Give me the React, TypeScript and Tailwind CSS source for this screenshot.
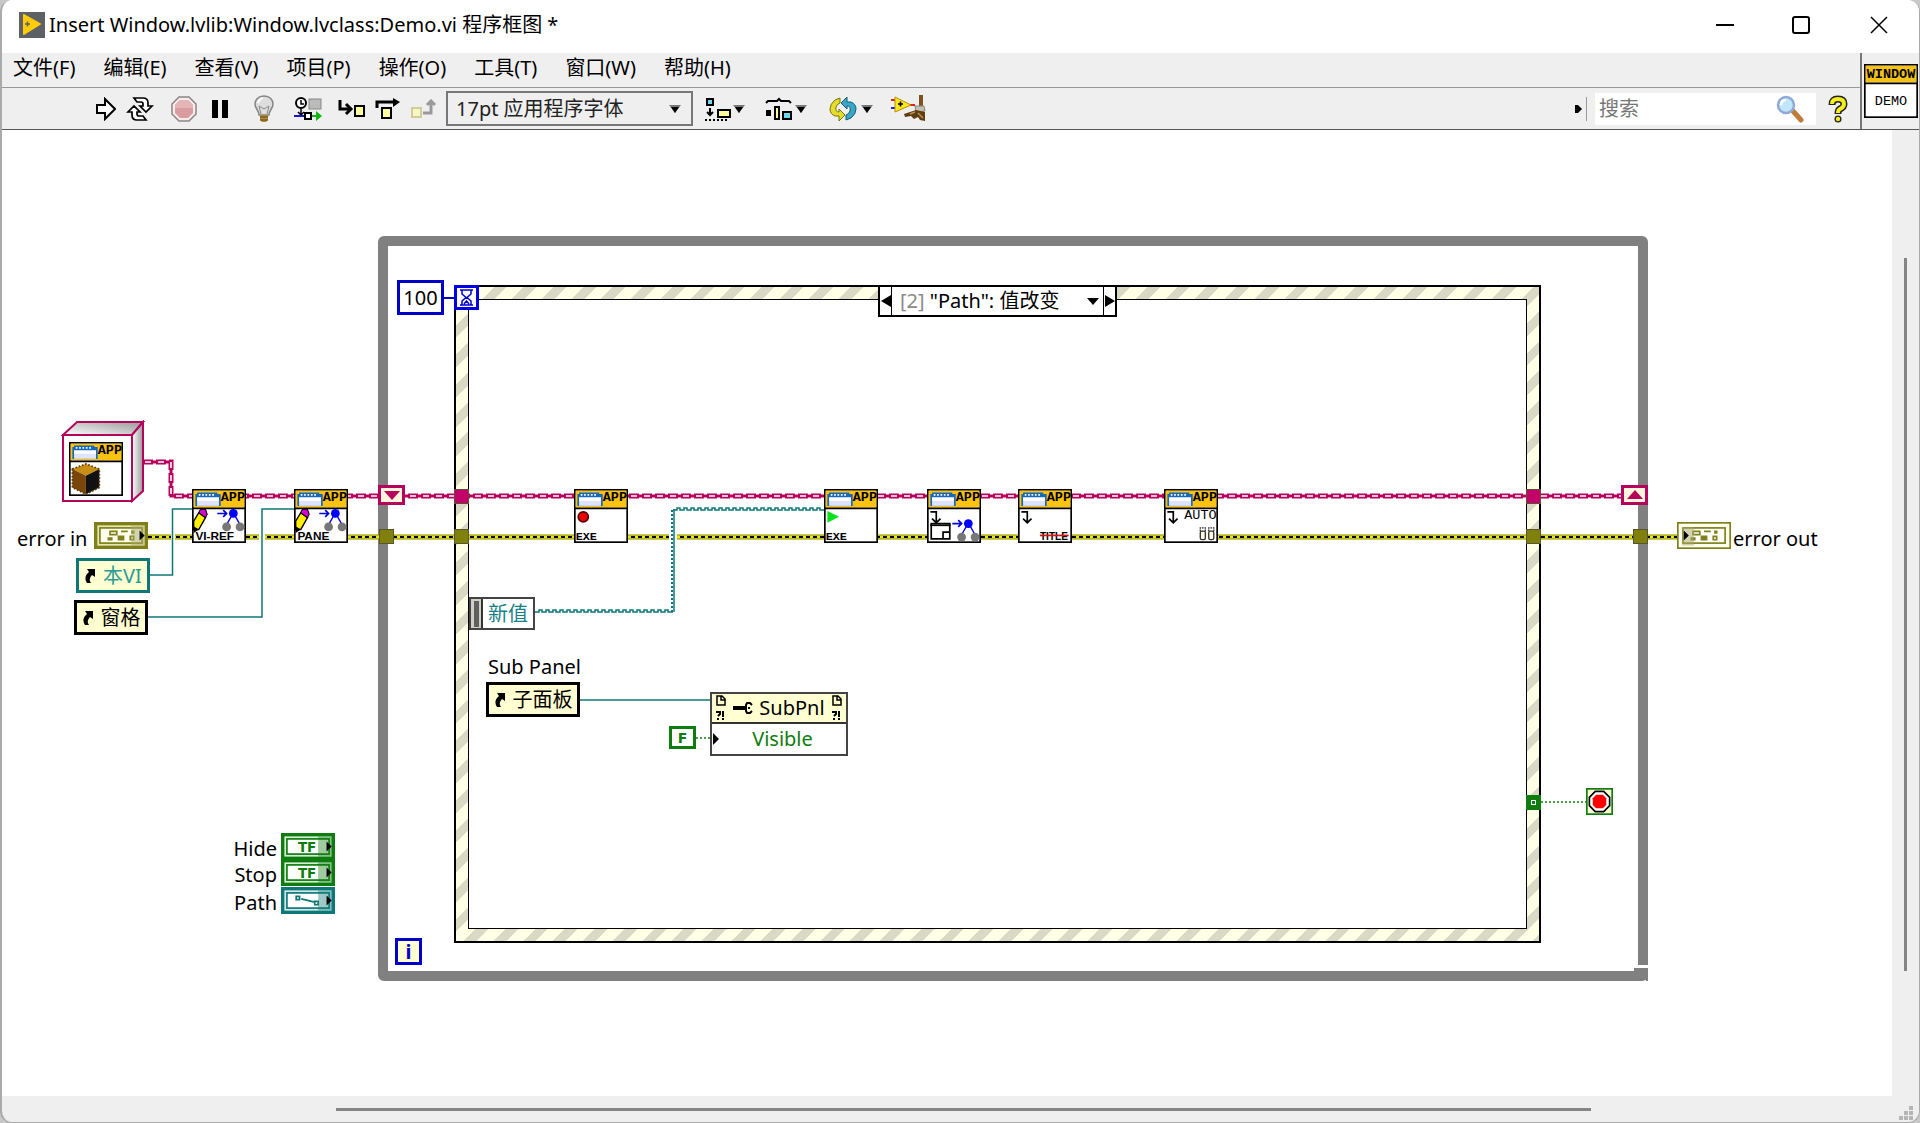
import type { ReactNode } from "react"

const menus = ["文件(F)", "编辑(E)", "查看(V)", "项目(P)", "操作(O)", "工具(T)", "窗口(W)", "帮助(H)"]

const mono = "Liberation Mono, monospace"
const sans = "Liberation Sans, sans-serif"

// square wave used for path-type wires
function wave(x1: number, x2: number, y: number) {
  let d = `M${x1} ${y}`
  for (let x = x1; x + 7 <= x2; x += 7) d += "h4v-2h3v2"
  return `${d}H${x2}`
}

/* ---------- toolbar icons ---------- */

function ToolButton({ label, className, children }: { label: string; className: string; children: ReactNode }) {
  return (
    <button aria-label={label} className={`flex h-8 shrink-0 items-center justify-center ${className}`}>
      {children}
    </button>
  )
}

function DropArrow() {
  return (
    <svg width="12" height="8" viewBox="0 0 12 8">
      <path d="M0 0h12L6 8z" fill="#777" />
      <path d="M2 2h8L6 8z" fill="#000" />
    </svg>
  )
}

function LogoIcon() {
  return (
    <svg width="26" height="26" viewBox="0 0 26 26">
      <rect width="26" height="26" fill="#5d6065" />
      <path d="M4 3q0-1 1-1l16 9q2 1 0 2L5 23q-1 0-1-1z" fill="#ffcc0a" />
      <path d="M6 12h5M8.500 9.500v5" stroke="#5d6065" strokeWidth="1.500" />
    </svg>
  )
}

function RunIcon() {
  return (
    <svg width="20" height="24" viewBox="0 0 20 24">
      <path d="M1 8h8V2l10 10L9 22v-6H1z" fill="#fff" stroke="#000" strokeWidth="2" />
    </svg>
  )
}

function RunLoopIcon() {
  return (
    <svg width="28" height="26" viewBox="0 0 28 26" fill="#fff" stroke="#000" strokeWidth="1.700">
      <path d="M8 2h9q5 0 5 5v3h4l-6 6-6-6h3V8q0-2-2-2h-4z" />
      <path d="M20 24h-9q-5 0-5-5v-3H2l6-6 6 6h-3v2q0 2 2 2h4z" />
    </svg>
  )
}

function AbortIcon() {
  return (
    <svg width="26" height="26" viewBox="0 0 26 26">
      <path d="M8 1h10l7 7v10l-7 7H8l-7-7V8z" fill="#f6eaea" stroke="#8d8585" strokeWidth="1.5" />
      <path d="M9 4h8l5 5v8l-5 5H9l-5-5V9z" fill="#d99ca0" />
      <path d="M9 4h8l5 5v3H4V9z" fill="#e4b4b6" />
    </svg>
  )
}

function PauseIcon() {
  return (
    <svg width="16" height="18" viewBox="0 0 16 18">
      <path d="M0 0h6v18H0zM10 0h6v18h-6z" fill="#000" />
    </svg>
  )
}

function BulbIcon() {
  return (
    <svg width="22" height="28" viewBox="0 0 22 28">
      <path
        d="M11 1c6 0 9 4 9 8 0 5-4 6-4 11H6c0-5-4-6-4-11 0-4 3-8 9-8z"
        fill="#dedede"
        stroke="#858585"
        strokeWidth="1.5"
      />
      <path d="M5 8q1-4 5-5" fill="none" stroke="#fff" strokeWidth="2" />
      <path d="M8 19l-2-8 5 3 5-3-2 8" fill="none" stroke="#8a8a8a" />
      <path d="M7 20h8v5l-2 2H9l-2-2z" fill="#b28b3c" />
      <path d="M7 22h8M7 25h8" stroke="#5e4415" />
    </svg>
  )
}

function RetainIcon() {
  return (
    <svg width="28" height="26" viewBox="0 0 28 26">
      <circle cx="7" cy="7" r="5" fill="#fff" stroke="#000" strokeWidth="2" />
      <path d="M7 4v4h3M7 12v7M4 16l3 3 3-3" fill="none" stroke="#000" strokeWidth="1.5" />
      <rect x="15" y="3" width="12" height="10" fill="#bbb" stroke="#888" />
      <path d="M0 20h12" stroke="#1414c8" strokeWidth="2" />
      <rect x="11" y="17" width="6" height="6" fill="#fff" stroke="#000" strokeWidth="2" />
      <path d="M18 19h4v-4l6 5-6 5v-4h-4z" fill="#12b512" />
    </svg>
  )
}

function StepIntoIcon() {
  return (
    <svg width="28" height="20" viewBox="0 0 28 20">
      <path d="M2 1v9h9M8 5l5 5-5 5" fill="none" stroke="#000" strokeWidth="3" />
      <rect x="17" y="7" width="9" height="10" fill="#ffff9e" stroke="#000" strokeWidth="2" />
    </svg>
  )
}

function StepOverIcon() {
  return (
    <svg width="26" height="22" viewBox="0 0 26 22">
      <path d="M2 10V4h18" fill="none" stroke="#000" strokeWidth="3" />
      <path d="M18 0l7 4-7 5z" fill="#000" />
      <rect x="7" y="10" width="9" height="10" fill="#ffff9e" stroke="#000" strokeWidth="2" />
    </svg>
  )
}

function StepOutIcon() {
  return (
    <svg width="26" height="20" viewBox="0 0 26 20">
      <rect x="1" y="9" width="9" height="9" fill="#f8f6c2" stroke="#cfcd98" strokeWidth="2" />
      <path d="M12 14h8V4M16 6l4-4 4 4" fill="none" stroke="#999" strokeWidth="3" />
    </svg>
  )
}

function AlignIcon() {
  return (
    <svg width="26" height="24" viewBox="0 0 26 24">
      <rect x="2" y="2" width="6" height="6" fill="#6fd7ee" stroke="#000" strokeWidth="2" />
      <path d="M5 11v7M2 15l3 3 3-3" fill="none" stroke="#000" strokeWidth="2" />
      <rect x="13" y="13" width="12" height="7" fill="#ffff9e" stroke="#000" strokeWidth="2" />
      <path d="M0 23h22" stroke="#000" strokeDasharray="2 2" strokeWidth="2" />
    </svg>
  )
}

function DistributeIcon() {
  return (
    <svg width="28" height="24" viewBox="0 0 28 24">
      <path d="M1 6l2-2h9l2-2 2 2h8l2 2" fill="none" stroke="#000" strokeWidth="2" />
      <rect x="1" y="13" width="5" height="6" fill="#000" />
      <rect x="10" y="10" width="4" height="12" fill="#ffff9e" stroke="#000" strokeWidth="2" />
      <rect x="18" y="15" width="8" height="7" fill="#6fd7ee" stroke="#000" strokeWidth="2" />
    </svg>
  )
}

function ReorderIcon() {
  return (
    <svg width="28" height="26" viewBox="0 0 28 26">
      <path
        d="M11 2L6 4Q1 8 1 13t5 7h4v5l6-6-6-6v3q-4 0-3-5 1-3 4-4z"
        fill="#e4de28"
        stroke="#77730c"
      />
      <path
        d="M17 24l5-2q5-4 5-9t-5-7h-4V1l-6 6 6 6v-3q4 0 3 5-1 3-4 4z"
        fill="#3ba7c6"
        stroke="#125c76"
      />
    </svg>
  )
}

function CleanupIcon() {
  return (
    <svg width="36" height="28" viewBox="0 0 36 28">
      <path d="M0 5h4M18 10h6" stroke="#d22" strokeWidth="2" />
      <path d="M0 13h4" stroke="#22d" strokeWidth="2" />
      <path d="M4 2l16 8L4 17z" fill="#ffe81a" stroke="#b98f00" />
      <path d="M7 9h5M9.500 6.500v5" stroke="#000" strokeWidth="1.5" />
      <path d="M28 0h4v12h-4z" fill="#7a5320" />
      <path d="M24 11h9l1 5-9 1z" fill="#c4c0b0" stroke="#8a8676" />
      <path d="M13 19l12-4 9 2v9l-5-1-2-3-4 2-3-3-6 1z" fill="#5d3e10" />
      <path d="M19 19l5-2M27 18l5 5" stroke="#c0904a" strokeWidth="1.5" />
    </svg>
  )
}

function MagnifierIcon() {
  return (
    <svg width="28" height="28" viewBox="0 0 28 28">
      <path d="M17 16l8 9" stroke="#c07a3c" strokeWidth="5" strokeLinecap="round" />
      <circle cx="10" cy="10" r="8" fill="#bfe6fb" stroke="#8fa9d6" strokeWidth="2.5" />
      <path d="M5 10q0-5 5-5" fill="none" stroke="#fff" strokeWidth="2.5" />
    </svg>
  )
}

function HelpIcon() {
  return (
    <svg width="20" height="28" viewBox="0 0 20 28">
      <path d="M4 10q0-6 6-6t6 5q0 3-4 5-2 1-2 5" fill="none" stroke="#222" strokeWidth="7" />
      <circle cx="10" cy="24" r="3.5" fill="#222" />
      <path d="M4 9q0-5 6-5t6 5q0 3-4 5-2 1-2 4" fill="none" stroke="#f5ee1c" strokeWidth="4" />
      <circle cx="10" cy="24" r="2.2" fill="#f5ee1c" />
    </svg>
  )
}

/* ---------- diagram glyphs ---------- */

function SubVi({ className, children }: { className: string; children: ReactNode }) {
  return (
    <svg viewBox="0 0 32 32" className={`absolute size-[54px] ${className}`}>
      <rect x="0.5" y="0.5" width="31" height="31" fill="#fff" stroke="#000" />
      <rect x="1" y="1" width="30" height="10" fill="#ffc20e" />
      <path d="M0 11.5h32" stroke="#000" />
      <path d="M2 3h1V2h12v1h2v7H2z" fill="#1668b8" />
      <path d="M3 5h13v5H3z" fill="#dfe3ff" />
      <path d="M3 5h13v2H3z" fill="#fff" />
      <path d="M4 3.5h10" stroke="#fff" strokeDasharray="1 1" />
      <text x="17" y="7" fontFamily={mono} fontSize="8" fontWeight="700">
        APP
      </text>
      {children}
    </svg>
  )
}

function RefGlyph({ y = 0 }: { y?: number }) {
  return (
    <g transform={`translate(0 ${y})`}>
      <path d="M15 14.5h5M18.500 12.500l2 2-2 2" fill="none" stroke="#0000e0" />
      <path d="M24 15l-4 7M25 15l4 7" stroke="#0000e0" strokeWidth="0.8" />
      <circle cx="24.500" cy="14.500" r="2.600" fill="#0000ff" />
      <circle cx="20.500" cy="22.500" r="2.600" fill="#777" />
      <circle cx="28.500" cy="22.500" r="2.600" fill="#777" />
    </g>
  )
}

function PencilGlyph() {
  return (
    <g>
      <path d="M4 14l4 3-4 7H1v-5z" fill="#ffee00" stroke="#000" strokeWidth="0.8" />
      <path d="M5 12h3l1 3-1 2-4-3z" fill="#d400d4" stroke="#000" strokeWidth="0.6" />
      <path d="M1 22v4l3-2z" fill="#000" />
    </g>
  )
}

function DownArrowGlyph() {
  return <path d="M2 13.500h3.500v6M3 17.500l2.500 2.500 2.500-2.500" fill="none" stroke="#000" />
}

function RefConstant({ className, children }: { className: string; children: ReactNode }) {
  return (
    <div className={`absolute flex h-[35px] items-center justify-center gap-2 border-3 bg-[#ffffd2] ${className}`}>
      <svg width="11" height="16" viewBox="0 0 11 16">
        <path d="M3 1h8v8L8 7q-4 4-1 8H3q-4-6 2-11z" fill="#000" />
      </svg>
      <span>{children}</span>
    </div>
  )
}

function BoolTerminal({ className }: { className: string }) {
  return (
    <svg viewBox="0 0 32 16" className={`absolute h-[27px] w-[54px] ${className}`}>
      <rect width="32" height="16" fill="#0e7c0e" />
      <rect x="2" y="2" width="28" height="12" fill="#d5ecd5" />
      <rect x="3.500" y="3.500" width="25" height="9" fill="#fff" stroke="#0e7c0e" />
      <text x="10" y="11" fontFamily="DejaVu Sans, sans-serif" fontSize="8" fontWeight="700" fill="#0e7c0e">
        TF
      </text>
      <rect x="22" y="2" width="9" height="12" fill="#0e7c0e" opacity="0.4" />
      <path d="M27 5v6l3-3z" fill="#000" />
    </svg>
  )
}

function PathTerminal({ className }: { className: string }) {
  return (
    <svg viewBox="0 0 32 16" className={`absolute h-[27px] w-[54px] ${className}`}>
      <rect width="32" height="16" fill="#0e7878" />
      <rect x="2" y="2" width="28" height="12" fill="#d2eaea" />
      <rect x="3.500" y="3.500" width="25" height="9" fill="#fff" stroke="#0e7878" />
      <path d="M9 5.500h2v2H9zM20 8.500h2v2h-2zM12 7l8 2" fill="none" stroke="#0e7878" />
      <rect x="22" y="2" width="9" height="12" fill="#0e7878" opacity="0.4" />
      <path d="M27 5v6l3-3z" fill="#000" />
    </svg>
  )
}

function ClusterGlyph() {
  return (
    <g fill="#80801a">
      <path d="M9 5h5v3H9zM10 6v1h3V6z" fillRule="evenodd" />
      <path d="M16 5h4v1h-4zM22 5h2v2h-2zM8 9h3v2H8zM14 8h4v3h-4zM21 8h3v3h-3zM22 9v1h1V9z" fillRule="evenodd" />
    </g>
  )
}

function ErrorIn({ className }: { className: string }) {
  return (
    <svg viewBox="0 0 32 16" className={`absolute h-[27px] w-[54px] ${className}`}>
      <rect width="32" height="16" fill="#80801a" />
      <rect x="2" y="2" width="28" height="12" fill="#e8e8b4" />
      <rect x="3.500" y="3.500" width="25" height="9" fill="#fffff0" stroke="#80801a" />
      <ClusterGlyph />
      <rect x="22" y="2" width="8" height="12" fill="#a8a868" opacity="0.5" />
      <path d="M27 5v6l3-3z" fill="#000" />
    </svg>
  )
}

function ErrorOut({ className }: { className: string }) {
  return (
    <svg viewBox="0 0 32 16" className={`absolute h-[27px] w-[54px] ${className}`}>
      <rect x="0.500" y="0.500" width="31" height="15" fill="#fffff0" stroke="#80801a" />
      <rect x="3.500" y="3.500" width="25" height="9" fill="#fff" stroke="#80801a" />
      <ClusterGlyph />
      <rect x="3" y="3" width="7" height="11" fill="#a8a868" opacity="0.5" />
      <path d="M4 5v6l3-3z" fill="#000" />
    </svg>
  )
}

function ShiftRegister({ className, d }: { className: string; d: string }) {
  return (
    <div
      className={`absolute flex h-5 w-[27px] items-center justify-center border-3 border-[#b5045c] bg-[#fff4dc] ${className}`}
    >
      <svg width="18" height="10" viewBox="0 0 18 10">
        <path d={d} fill="#b5045c" />
      </svg>
    </div>
  )
}

function Tunnel({ className }: { className: string }) {
  return <div className={`absolute size-[15px] border border-[#555530] ${className}`} />
}

function PropertyFlags() {
  return (
    <svg width="10" height="26" viewBox="0 0 10 26">
      <path d="M1 1h5l3 3v6H1z M5 1v4h4" fill="none" stroke="#000" strokeWidth="1.5" />
      <path d="M0 17h4v2l-2 2M2 23v2M7 16v6M7 23v2" fill="none" stroke="#000" strokeWidth="2" />
    </svg>
  )
}

function Wires() {
  const classWire = "M141 332H169V366H1620"
  const errorWire = "M146 407H1676"
  return (
    <svg width="1890" height="966" className="absolute left-0 top-0" fill="none">
      <path d={classWire} stroke="#b5045c" strokeWidth="5" strokeDasharray="10 3" />
      <path d={classWire} stroke="#b5045c" strokeWidth="3" />
      <path d={classWire} stroke="#fff" strokeWidth="1.600" strokeDasharray="6 7" strokeDashoffset="-2" />

      <path d={errorWire} stroke="#8c8c00" strokeWidth="5" />
      <path d={errorWire} stroke="#eaea00" strokeWidth="3" />
      <path d={errorWire} stroke="#000" strokeWidth="2" strokeDasharray="4 3" />

      {/* gaps where reference wires jump over the error wire */}
      <path d="M171 402v10" stroke="#fff" strokeWidth="4" />
      <path d="M260 402v10" stroke="#fff" strokeWidth="6" />
      <path d="M671 402v10" stroke="#fff" strokeWidth="8" />
      <g stroke="#0e7878" strokeWidth="1.500">
        <path d="M147 445H170.500V379H190" />
        <path d="M146 487H260V379H293" />
        <path d="M578 570H708" />
        <path d={wave(533, 671, 482)} />
        <path d={wave(671, 822, 380)} />
        <path d="M672 482V379" />
        <path d="M670 482V379" strokeDasharray="2 2" strokeWidth="2" />
      </g>
      <path d="M442 168h12" stroke="#0000c8" strokeWidth="2" />
      <path d="M694 608h14M1539 672h45" stroke="#0e7c0e" strokeWidth="1.500" strokeDasharray="2 2" />
    </svg>
  )
}

function Diagram() {
  return (
    <main className="relative min-h-[880px] flex-1 overflow-hidden bg-white">
      {/* while loop */}
      <div className="absolute left-[376px] top-[106px] h-[745px] w-[1270px] rounded-md border-10 border-[#808080]" />
      <svg width="16" height="18" className="absolute left-[1632px] top-[834px]">
        <path d="M0 1h16v3H0z" fill="#fff" />
        <path d="M0 4h14v13h-2v-1H7v1H0V6z" fill="#808080" />
      </svg>

      {/* event structure */}
      <div className="absolute left-[452px] top-[155px] h-[658px] w-[1087px] border-2 border-black bg-[repeating-linear-gradient(135deg,#ffffe6_0px,#ffffe6_6px,#d9d9c6_6px,#d9d9c6_15px,#ffffe6_15px,#ffffe6_21px)] p-3">
        <div className="h-full border border-black bg-white" />
      </div>

      <Wires />

      <div className="absolute left-[876px] top-[155px] flex h-8 w-[239px] border-2 border-black bg-white">
        <button aria-label="Previous case" className="flex w-3 items-center justify-center border-r border-black">
          <svg width="10" height="12" viewBox="0 0 10 12">
            <path d="M10 0v12L0 6z" />
          </svg>
        </button>
        <button className="flex flex-1 items-center justify-between pl-2 pr-1">
          <span className="whitespace-pre">
            <span className="text-[#8a8a8a]">[2]</span> "Path": 值改变
          </span>
          <svg width="12" height="7" viewBox="0 0 12 7">
            <path d="M0 0h12L6 7z" />
          </svg>
        </button>
        <button aria-label="Next case" className="flex w-3 items-center justify-center border-l border-black">
          <svg width="10" height="12" viewBox="0 0 10 12">
            <path d="M0 0v12l10-6z" />
          </svg>
        </button>
      </div>

      <div className="absolute left-[395px] top-[150px] flex h-[35px] w-[47px] items-center justify-center border-3 border-[#0000c8] bg-white">
        100
      </div>
      <div className="absolute left-[452px] top-[155px] flex size-[25px] items-center justify-center border-3 border-[#0000e0] bg-white">
        <svg width="15" height="17" viewBox="0 0 15 17" fill="none" stroke="#0000c8" strokeWidth="1.500">
          <path d="M1 1h13M1 16h13M3 1v4l4 3.500L3 12v4M12 1v4L8 8.500l4 3.500v4M5 15l2.500-3 2.500 3" />
        </svg>
      </div>
      <div className="absolute left-[393px] top-[808px] flex size-[27px] items-center justify-center border-3 border-[#0000c8] bg-[#ffffd2] font-bold text-[#0000c8]">
        i
      </div>

      <ShiftRegister className="left-[376px] top-[355px]" d="M1 1h16L9 10z" />
      <ShiftRegister className="left-[1619px] top-[355px]" d="M1 9h16L9 0z" />
      <Tunnel className="left-[452px] top-[359px] bg-[#c4006a]" />
      <Tunnel className="left-[1524px] top-[359px] bg-[#c4006a]" />
      <Tunnel className="left-[377px] top-[399px] bg-[#80800a]" />
      <Tunnel className="left-[452px] top-[399px] bg-[#80800a]" />
      <Tunnel className="left-[1524px] top-[399px] bg-[#80800a]" />
      <Tunnel className="left-[1631px] top-[399px] bg-[#80800a]" />
      <div className="absolute left-[1524px] top-[665px] flex size-[15px] items-center justify-center bg-[#0e7c0e]">
        <div className="size-[5px] border border-white" />
      </div>

      {/* class constant */}
      <svg width="84" height="84" className="absolute left-[59px] top-[290px]">
        <defs>
          <linearGradient id="cubeTop" x1="0" x2="1" y1="1" y2="0">
            <stop offset="0" stopColor="#fff" />
            <stop offset="1" stopColor="#999" />
          </linearGradient>
          <linearGradient id="cubeSide" x1="0" x2="1">
            <stop offset="0" stopColor="#fff" />
            <stop offset="1" stopColor="#999" />
          </linearGradient>
        </defs>
        <g stroke="#b5045c" strokeWidth="2">
          <path d="M2 15L16 2h66L71 15z" fill="url(#cubeTop)" />
          <path d="M71 15L82 2v69L71 81z" fill="url(#cubeSide)" />
          <path d="M2 15h69v66H2z" fill="#fff" />
        </g>
      </svg>
      <SubVi className="left-[67px] top-[312px]">
        <path d="M2 16l8-3 8 3-8 4z" fill="#c98e14" />
        <path d="M2 16l8 4v11l-8-4z" fill="#7a4508" />
        <path d="M18 16l-8 4v11l8-4z" fill="#111" />
        <path d="M2 16l8-3 8 3v11l-8 4-8-4z" fill="none" stroke="#5e3a06" strokeDasharray="1 1" />
      </SubVi>

      <SubVi className="left-[190px] top-[359px]">
        <PencilGlyph />
        <RefGlyph />
        <text x="2" y="30" fontFamily={sans} fontSize="7" fontWeight="700">
          VI-REF
        </text>
      </SubVi>
      <SubVi className="left-[292px] top-[359px]">
        <PencilGlyph />
        <RefGlyph />
        <text x="2" y="30" fontFamily={sans} fontSize="7" fontWeight="700">
          PANE
        </text>
      </SubVi>
      <SubVi className="left-[572px] top-[359px]">
        <circle cx="5.500" cy="16.500" r="3" fill="#e00" stroke="#500" />
        <text x="1" y="30" fontFamily={mono} fontSize="7" fontWeight="700">
          EXE
        </text>
      </SubVi>
      <SubVi className="left-[822px] top-[359px]">
        <path d="M2 13v7l7-3.500z" fill="#0be01c" />
        <text x="1" y="30" fontFamily={mono} fontSize="7" fontWeight="700">
          EXE
        </text>
      </SubVi>
      <SubVi className="left-[925px] top-[359px]">
        <DownArrowGlyph />
        <path d="M2.500 20.500h11v9h-11zM9.500 29v-3.500h4" fill="none" stroke="#000" />
        <path d="M2 21.500h12" stroke="#000" />
        <RefGlyph y={6} />
      </SubVi>
      <SubVi className="left-[1016px] top-[359px]">
        <DownArrowGlyph />
        <text x="13" y="30" fontFamily={sans} fontSize="6" fontWeight="700">
          TITLE
        </text>
        <path d="M13 27.500h17" stroke="#d01818" />
      </SubVi>
      <SubVi className="left-[1162px] top-[359px]">
        <DownArrowGlyph />
        <text x="12" y="18" fontFamily={mono} fontSize="8" fontWeight="400">
          AUTO
        </text>
        <g fill="#fffbe0" stroke="#333" strokeWidth="0.8">
          <rect x="21.500" y="25" width="3" height="5" rx="1" />
          <rect x="26.500" y="25" width="3" height="5" rx="1" />
          <path d="M21.500 25v-2h3v2M26.500 25v-2h3v2" fill="none" strokeDasharray="1 0.500" />
        </g>
      </SubVi>

      <div className="absolute left-[15px] top-[394px] leading-[30px]">error in</div>
      <ErrorIn className="left-[92px] top-[392px]" />
      <ErrorOut className="left-[1675px] top-[392px]" />
      <div className="absolute left-[1731px] top-[394px] leading-[30px]">error out</div>

      <RefConstant className="left-[74px] top-[428px] w-[74px] border-[#0e7878] text-[#2b9a94]">本VI</RefConstant>
      <RefConstant className="left-[72px] top-[470px] w-[74px] border-black">窗格</RefConstant>

      <div className="absolute left-[467px] top-[467px] flex h-[33px] w-[66px] border-2 border-[#444]">
        <div className="flex w-3 items-center justify-center border-r-2 border-[#333] bg-[#d0d0c4]">
          <div className="h-[26px] w-[5px] bg-[#606060]" />
        </div>
        <div className="flex flex-1 items-center justify-center bg-white text-[#187f86]">新值</div>
      </div>

      <div className="absolute left-[486px] top-[522px] leading-[30px]">Sub Panel</div>
      <RefConstant className="left-[484px] top-[552px] w-[94px] border-black">子面板</RefConstant>

      <div className="absolute left-[667px] top-[596px] flex h-[23px] w-[27px] items-center justify-center border-3 border-[#0e7c0e] bg-white font-['DejaVu_Sans'] text-sm font-bold text-[#0e7c0e]">
        F
      </div>
      <div className="absolute left-[708px] top-[562px] flex h-16 w-[138px] flex-col border-2 border-[#444]">
        <div className="flex h-[30px] items-center justify-between border-b-2 border-[#333] bg-[#ffffd2] px-1">
          <PropertyFlags />
          <div className="flex items-center gap-1.5">
            <svg width="20" height="12" viewBox="0 0 20 12">
              <path d="M0 4h13v4H0z" />
              <path d="M19 3l-2-2h-3l-1 2v6l1 2h3l2-2M16 5v2" fill="none" stroke="#000" strokeWidth="2" />
            </svg>
            SubPnl
          </div>
          <PropertyFlags />
        </div>
        <div className="flex flex-1 items-center bg-white pl-px text-[#0e7c0e]">
          <svg width="6" height="12" viewBox="0 0 6 12">
            <path d="M0 0v12l6-6z" fill="#000" />
          </svg>
          <span className="flex-1 text-center">Visible</span>
        </div>
      </div>

      <svg viewBox="0 0 16 16" className="absolute left-[1584px] top-[658px] size-[27px]">
        <rect x="0.500" y="0.500" width="15" height="15" fill="#ffffd8" stroke="#0e7c0e" />
        <path d="M5.500 2h5L14 5.500v5L10.500 14h-5L2 10.500v-5z" fill="#fff" stroke="#000" />
        <path d="M6 4h4l2 2v4l-2 2H6l-2-2V6z" fill="#f00" />
      </svg>

      <div className="absolute left-[195px] top-[704px] w-20 text-right leading-[30px]">Hide</div>
      <div className="absolute left-[195px] top-[730px] w-20 text-right leading-[30px]">Stop</div>
      <div className="absolute left-[195px] top-[758px] w-20 text-right leading-[30px]">Path</div>
      <BoolTerminal className="left-[279px] top-[703px]" />
      <BoolTerminal className="left-[279px] top-[729px]" />
      <PathTerminal className="left-[279px] top-[757px]" />
    </main>
  )
}

function TitleBar() {
  return (
    <header className="flex h-[53px] items-center bg-white pb-1 pl-[17px]">
      <LogoIcon />
      <h1 className="ml-1 flex-1">Insert Window.lvlib:Window.lvclass:Demo.vi 程序框图 *</h1>
      <button aria-label="Minimize" className="flex h-full w-[76px] items-center justify-center">
        <svg width="18" height="18" stroke="#000" strokeWidth="2">
          <path d="M0 9h18" />
        </svg>
      </button>
      <button aria-label="Maximize" className="flex h-full w-[76px] items-center justify-center">
        <svg width="18" height="18" fill="none" stroke="#000" strokeWidth="2">
          <rect x="1" y="1" width="16" height="16" rx="2" />
        </svg>
      </button>
      <button aria-label="Close" className="flex h-full w-20 items-center justify-center">
        <svg width="18" height="18" stroke="#000" strokeWidth="1.500">
          <path d="M1 1l16 16M17 1L1 17" />
        </svg>
      </button>
    </header>
  )
}

function Toolbar() {
  return (
    <div className="flex h-[41px] items-center pl-23">
      <ToolButton label="Run" className="w-6">
        <RunIcon />
      </ToolButton>
      <ToolButton label="Run continuously" className="ml-2 w-7">
        <RunLoopIcon />
      </ToolButton>
      <ToolButton label="Abort" className="ml-4 w-7">
        <AbortIcon />
      </ToolButton>
      <ToolButton label="Pause" className="ml-3 w-5">
        <PauseIcon />
      </ToolButton>
      <ToolButton label="Highlight execution" className="ml-5.5 w-6">
        <BulbIcon />
      </ToolButton>
      <ToolButton label="Retain wire values" className="ml-4.5 w-7">
        <RetainIcon />
      </ToolButton>
      <ToolButton label="Step into" className="ml-4 w-7">
        <StepIntoIcon />
      </ToolButton>
      <ToolButton label="Step over" className="ml-2 w-7">
        <StepOverIcon />
      </ToolButton>
      <ToolButton label="Step out" className="ml-2 w-7">
        <StepOutIcon />
      </ToolButton>
      <div className="relative ml-2 w-[247px] shrink-0">
        <select
          aria-label="Font"
          className="h-[35px] w-full appearance-none border-2 border-[#777] bg-[#efefef] pl-2 text-[#222]"
        >
          <option>17pt 应用程序字体</option>
        </select>
        <div className="pointer-events-none absolute inset-y-0 right-3 flex items-center">
          <DropArrow />
        </div>
      </div>
      <ToolButton label="Align objects" className="ml-3 gap-0.5">
        <AlignIcon />
        <DropArrow />
      </ToolButton>
      <ToolButton label="Distribute objects" className="ml-5 gap-0.5">
        <DistributeIcon />
        <DropArrow />
      </ToolButton>
      <ToolButton label="Reorder" className="ml-5.5 gap-1">
        <ReorderIcon />
        <DropArrow />
      </ToolButton>
      <ToolButton label="Clean up diagram" className="ml-4.5">
        <CleanupIcon />
      </ToolButton>

      <div className="ml-auto flex items-center">
        <svg width="7" height="8" viewBox="0 0 7 8">
          <path d="M0 0h3l4 4-4 4H0z" />
        </svg>
        <div className="ml-1 mr-2 h-6 w-px bg-[#999]" />
        <label className="flex h-8 w-[221px] items-center bg-white pl-1 pr-3">
          <input aria-label="搜索" placeholder="搜索" className="min-w-0 flex-1 placeholder:text-[#777]" />
          <MagnifierIcon />
        </label>
        <button aria-label="Help" className="ml-3 mr-3">
          <HelpIcon />
        </button>
      </div>
    </div>
  )
}

export default function App() {
  return (
    <div className="bg-[#c8c8c8] font-['Noto_Sans','Noto_Sans_CJK_SC',sans-serif] text-[20px] leading-6 text-black">
      <div className="flex min-h-screen flex-col overflow-hidden rounded-xl border border-l-2 border-t-0 border-[#aaa] bg-[#efefef]">
        <TitleBar />
        <div className="flex border-b border-[#555]">
          <div className="min-w-0 flex-1">
            <nav className="flex h-[35px] items-center gap-7 border-b border-[#999] pl-[11px]">
              {menus.map((menu) => (
                <button key={menu} className="pb-1">
                  {menu}
                </button>
              ))}
            </nav>
            <Toolbar />
          </div>
          <div className="flex w-[59px] items-center justify-center border-l-2 border-[#777]">
            <svg viewBox="0 0 32 32" className="size-[54px]">
              <rect x="0.500" y="0.500" width="31" height="31" fill="#fff" stroke="#000" />
              <rect x="1" y="1" width="30" height="10" fill="#f5c21a" />
              <path d="M0 11.500h32" stroke="#000" />
              <text x="16" y="8" textAnchor="middle" fontFamily={mono} fontSize="8" fontWeight="700">
                WINDOW
              </text>
              <text x="16" y="24" textAnchor="middle" fontFamily={mono} fontSize="8" fontWeight="400">
                DEMO
              </text>
            </svg>
          </div>
        </div>
        <div className="flex flex-1">
          <Diagram />
          <div className="w-[27px] shrink-0 pl-3 pt-32">
            <div className="h-[713px] w-[3px] bg-[#858585]" />
          </div>
        </div>
        <div className="flex h-[26px] items-center justify-between">
          <div className="ml-[17.4%] h-[3px] w-[65.5%] bg-[#858585]" />
          <svg width="16" height="16" fill="#b5b5b5" className="mr-1 self-end">
            <path d="M10 0h4v4h-4zM5 5h4v4H5zM10 5h4v4h-4zM0 10h4v4H0zM5 10h4v4H5zM10 10h4v4h-4z" />
          </svg>
        </div>
      </div>
    </div>
  )
}
